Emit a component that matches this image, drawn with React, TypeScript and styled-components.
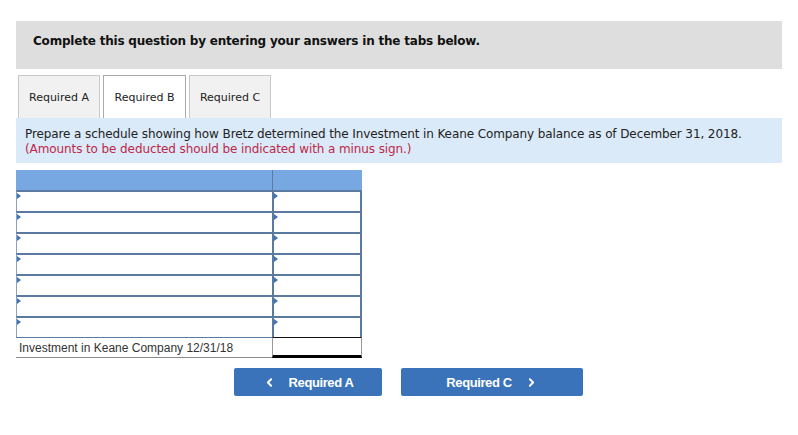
import React from "react";
import styled, { createGlobalStyle } from "styled-components";
import { ChevronLeft, ChevronRight } from "lucide-react";

const GlobalStyle = createGlobalStyle`
  body {
    margin: 0;
    background: #fff;
    font-family: "DejaVu Sans", Verdana, sans-serif;
  }
`;

const Page = styled.div`
  padding: 21px 16px 0 16px;
  width: 766px;
`;

const Banner = styled.div`
  box-sizing: border-box;
  height: 48px;
  background: #dedede;
  padding: 12px 17px;
  font-size: 12px;
  letter-spacing: -0.2px;
  font-weight: bold;
  color: #111;
  line-height: 16px;
`;

const Tabs = styled.div`
  display: flex;
  gap: 3px;
  margin-top: 6px;
  padding-left: 2px;
`;

const Tab = styled.div<{ $active?: boolean }>`
  box-sizing: border-box;
  width: ${(p) => (p.$active ? 83 : 82)}px;
  height: 43px;
  display: flex;
  align-items: center;
  justify-content: center;
  font-size: 11px;
  color: #222;
  background: ${(p) => (p.$active ? "#fff" : "#f1f1f1")};
  border: 1px solid ${(p) => (p.$active ? "#a9a9a9" : "#c9c9c9")};
  border-bottom: none;
`;

const Instructions = styled.div`
  box-sizing: border-box;
  height: 45px;
  background: #daeaf8;
  padding: 9px 9px 0 9px;
  font-size: 12px;
  letter-spacing: -0.1px;
  line-height: 15px;
  color: #222;
`;

const Note = styled.div`
  color: #bf2747;
`;

const Schedule = styled.div`
  margin-top: 7px;
  width: 346px;
  display: grid;
  grid-template-columns: 256px 90px;
  font-family: "Liberation Sans", Arial, sans-serif;
`;

const HeadCell = styled.div<{ $right?: boolean }>`
  height: 20px;
  background: #77a8e1;
  border-left: 1px solid ${(p) => (p.$right ? "#5d7c9f" : "#77a8e1")};
`;

const InputCell = styled.div<{ $right?: boolean }>`
  position: relative;
  box-sizing: border-box;
  height: 21px;
  background: #fff;
  border-top: 2px solid #5b7aa0;
  border-left: ${(p) => (p.$right ? "2px solid #5b7aa0" : "1px solid #8da2bb")};
  border-right: ${(p) => (p.$right ? "2px solid #5b7aa0" : "none")};
  &::before {
    content: "";
    position: absolute;
    left: 0;
    top: 1px;
    border-left: 4px solid #3f74b6;
    border-top: 3px solid transparent;
    border-bottom: 3px solid transparent;
  }
`;

const TotalLabel = styled.div`
  box-sizing: border-box;
  height: 21px;
  padding: 3px 0 0 3px;
  font-size: 12px;
  color: #333;
  border-top: 1px solid #5b7aa0;
  border-bottom: 1px solid #8b8b8b;
`;

const TotalCell = styled.div`
  box-sizing: border-box;
  height: 21px;
  border-top: 1px solid #111;
  border-left: 1px solid #999;
  border-right: 1px solid #999;
  border-bottom: 3px solid #000;
`;

const Nav = styled.div`
  display: flex;
  gap: 19px;
  margin-top: 10px;
  padding-left: 218px;
`;

const NavButton = styled.button<{ $width: number }>`
  width: ${(p) => p.$width}px;
  height: 28px;
  border: none;
  border-radius: 2px;
  background: #3a73b9;
  color: #fff;
  font-family: "Liberation Sans", Arial, sans-serif;
  font-size: 13px;
  letter-spacing: -0.4px;
  font-weight: bold;
  display: flex;
  align-items: center;
  justify-content: center;
  gap: 13px;
  padding: 0;
  cursor: pointer;
`;

const rows = [0, 1, 2, 3, 4, 5, 6];

export default function App() {
  return (
    <>
      <GlobalStyle />
      <Page>
        <Banner>Complete this question by entering your answers in the tabs below.</Banner>
        <Tabs>
          <Tab>Required A</Tab>
          <Tab $active>Required B</Tab>
          <Tab>Required C</Tab>
        </Tabs>
        <Instructions>
          Prepare a schedule showing how Bretz determined the Investment in Keane Company balance as of December 31, 2018.
          <Note>(Amounts to be deducted should be indicated with a minus sign.)</Note>
        </Instructions>
        <Schedule>
          <HeadCell />
          <HeadCell $right />
          {rows.map((r) => (
            <React.Fragment key={r}>
              <InputCell />
              <InputCell $right />
            </React.Fragment>
          ))}
          <TotalLabel>Investment in Keane Company 12/31/18</TotalLabel>
          <TotalCell />
        </Schedule>
        <Nav>
          <NavButton $width={148}>
            <ChevronLeft size={13} strokeWidth={3.5} />
            Required A
          </NavButton>
          <NavButton $width={182}>
            Required C
            <ChevronRight size={13} strokeWidth={3.5} />
          </NavButton>
        </Nav>
      </Page>
    </>
  );
}
